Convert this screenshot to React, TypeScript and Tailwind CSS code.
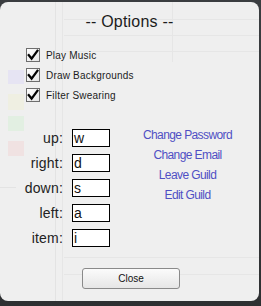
import React from "react";

function Check() {
  return (
    <span className="flex h-[14px] w-[14px] items-center justify-center border border-[#6e6e6e] bg-gradient-to-br from-[#ffffff] to-[#e4e4e4]">
      <svg width="12" height="12" viewBox="0 0 12 12">
        <path d="M1.8 6.2 L4.6 9.6 L10.4 1.8" fill="none" stroke="#000" strokeWidth="2.3" strokeLinecap="square" strokeLinejoin="miter" />
      </svg>
    </span>
  );
}

const font = { fontFamily: '"Liberation Sans", Arial, sans-serif' };

export default function App() {
  const opts = ["Play Music", "Draw Backgrounds", "Filter Swearing"];
  const keys: [string, string][] = [
    ["up:", "w"],
    ["right:", "d"],
    ["down:", "s"],
    ["left:", "a"],
    ["item:", "i"],
  ];
  const links = ["Change Password", "Change Email", "Leave Guild", "Edit Guild"];
  return (
    <div className="h-[306px] w-[261px] overflow-hidden bg-gradient-to-b from-[#3a3d40] to-[#2e3032] pt-[2px]" style={font}>
      <div className="relative flex h-[299px] w-[259px] flex-col rounded-[8px] bg-[#efefef] text-[#1c1c1c]">
        {/* faint page behind the overlay */}
        <div className="pointer-events-none absolute inset-0">
          <div className="absolute left-[55px] top-0 h-full w-px bg-[#e3e3e3]" />
          <div className="absolute left-[62px] top-0 h-full w-px bg-[#e6e6e6]" />
          <div className="absolute left-[172px] top-0 h-[60px] w-px bg-[#e6e6e6]" />
          <div className="absolute left-[64px] top-[17px] h-px w-[195px] bg-[#e6e6e6]" />
          <div className="absolute left-[64px] top-[33px] h-px w-[195px] bg-[#e6e6e6]" />
          <div className="absolute left-[64px] top-[49px] h-px w-[195px] bg-[#e6e6e6]" />
          <div className="absolute left-[64px] top-[255px] h-px w-[195px] bg-[#e6e6e6]" />
          <div className="absolute left-[64px] top-[272px] h-px w-[195px] bg-[#e6e6e6]" />
          <div className="absolute left-[8px] top-[68px] h-[14px] w-[16px] bg-[#e6e4f3]" />
          <div className="absolute left-[8px] top-[92px] h-[16px] w-[16px] bg-[#efefe2]" />
          <div className="absolute left-[8px] top-[114px] h-[15px] w-[16px] bg-[#e2efe2]" />
          <div className="absolute left-[8px] top-[139px] h-[15px] w-[16px] bg-[#f0e2e2]" />
          <div className="absolute left-0 top-[185px] h-px w-[16px] bg-[#e3e3e3]" />
        </div>

        <div className="relative flex flex-col">
          <div className="mt-[10px] h-[20px] text-center text-[16px] leading-[20px] tracking-[0.2px]">-- Options --</div>

          <div className="mt-[13px] flex flex-col pl-[26px]">
            {opts.map((o) => (
              <div key={o} className="flex h-[20px] items-center gap-[6px]">
                <Check />
                <span className="text-[10px] tracking-[0.2px]">{o}</span>
              </div>
            ))}
          </div>

          <div className="mt-[20px] flex">
            <div className="flex w-[110px] flex-col gap-[7px] pt-[4px]">
              {keys.map(([l, v]) => (
                <div key={l} className="flex h-[18px] items-center">
                  <span className="w-[63px] text-right text-[14px] leading-[18px] tracking-[0.2px] text-[#222]">{l}</span>
                  <span className="ml-[9px] flex h-[18px] w-[38px] items-center border border-black bg-white pl-[1px] text-[14px] leading-[16px] text-[#111]">
                    {v}
                  </span>
                </div>
              ))}
            </div>
            <div className="ml-[10px] flex w-[135px] flex-col items-center">
              {links.map((t) => (
                <div key={t} className="h-[20px] text-[12px] leading-[20px] tracking-[-0.6px] text-[#4f4fc4]">
                  {t}
                </div>
              ))}
            </div>
          </div>

          <button className="ml-[82px] mt-[21px] flex h-[21px] w-[98px] items-center justify-center rounded-[3px] border border-[#8a8a8a] bg-gradient-to-b from-[#fbfbfb] to-[#e6e6e6] text-[10px] text-[#111]">
            Close
          </button>
        </div>
      </div>
    </div>
  );
}
